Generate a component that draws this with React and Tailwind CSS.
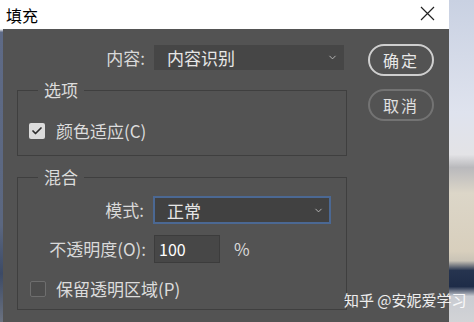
import { Check, ChevronDown } from 'lucide-react'

const font = { fontFamily: '"Noto Sans CJK SC", "Noto Sans", sans-serif' }

function Select({ value, className }) {
  return (
    <div className={`flex items-center justify-between ${className}`}>
      <span className="text-[17px] text-[#e6e6e6] leading-none">{value}</span>
      <ChevronDown size={11} strokeWidth={2} className="text-[#bdbdbd]" />
    </div>
  )
}

export default function App() {
  return (
    <div className="flex w-[474px] h-[322px] overflow-hidden relative" style={font}>
      <div className="w-[3px] bg-[linear-gradient(to_bottom,#ffffff_0%,#ffffff_9%,#5e6a86_10%,#5b6780_70%,#3c4a66_85%,#6b7280_100%)]" />

      <div className="w-[446px] flex flex-col bg-[#535353]">
        {/* title bar */}
        <div className="h-[29px] bg-white flex items-center justify-between pl-[3px] pr-[14px]">
          <span className="text-[16px] text-black leading-none">填充</span>
          <svg width="15" height="15" viewBox="0 0 15 15" className="mb-[2px]">
            <path d="M1 1 L14 14 M14 1 L1 14" stroke="#222" strokeWidth="1.2" fill="none" />
          </svg>
        </div>

        {/* body */}
        <div className="flex pl-[14px]">
          <div className="w-[330px] flex flex-col">
            <div className="flex items-center mt-[16px] h-[25px]">
              <div className="w-[137px] pr-[9px] text-right text-[17px] text-[#d9d9d9]">内容:</div>
              <Select value="内容识别" className="w-[190px] h-[25px] bg-[#464646] pl-[13px] pr-[6px]" />
            </div>

            <fieldset className="mt-[10px] border border-[#3f3f3f] pb-[14px]">
              <legend className="ml-[20px] px-[6px] text-[17px] leading-[20px] text-[#dcdcdc]">选项</legend>
              <div className="flex items-center h-[20px] mt-[21px] pl-[11px]">
                <div className="w-[16px] h-[16px] rounded-[2px] bg-[#dcdcdc] flex items-center justify-center">
                  <Check size={12} strokeWidth={3.5} className="text-[#2e2e2e]" />
                </div>
                <span className="ml-[11px] text-[17px] text-[#dcdcdc]">颜色适应(C)</span>
              </div>
            </fieldset>

            <fieldset className="mt-[11px] border border-[#3f3f3f] pb-[10px]">
              <legend className="ml-[20px] px-[6px] text-[17px] leading-[20px] text-[#dcdcdc]">混合</legend>
              <div className="flex items-center mt-[9px] h-[28px]">
                <div className="w-[135px] pr-[9px] text-right text-[17px] text-[#d9d9d9]">模式:</div>
                <Select value="正常" className="w-[178px] h-[28px] bg-[#414141] border-2 border-[#4b6893] pl-[12px] pr-[5px]" />
              </div>
              <div className="flex items-center mt-[11px] h-[28px]">
                <div className="w-[136px] pr-[8px] text-right text-[17px] text-[#d9d9d9] whitespace-nowrap">不透明度(O):</div>
                <div className="w-[66px] h-[28px] bg-[#474747] border border-[#3c3c3c] flex items-center pl-[4px] text-[16px] text-white">100</div>
                <span className="ml-[14px] text-[17px] text-[#d9d9d9]">%</span>
              </div>
              <div className="flex items-center h-[20px] mt-[16px] pl-[12px]">
                <div className="w-[16px] h-[16px] rounded-[2px] border border-[#6e6e6e] bg-[#4d4d4d]" />
                <span className="ml-[10px] text-[17px] text-[#dcdcdc]">保留透明区域(P)</span>
              </div>
            </fieldset>
          </div>

          <div className="ml-[21px] flex flex-col pt-[15px] gap-[13px]">
            <button className="w-[66px] h-[32px] rounded-full border-2 border-[#cfcfcf] text-[16px] text-[#e8e8e8] tracking-[2px]">确定</button>
            <button className="w-[66px] h-[32px] rounded-full border-2 border-[#737373] text-[16px] text-[#e0e0e0] tracking-[2px]">取消</button>
          </div>
        </div>
      </div>

      <div className="flex-1 bg-[linear-gradient(to_bottom,#c9d1e2_0%,#dfe3ee_35%,#e3e3e6_48%,#b9b9bc_52%,#dcd6c8_60%,#d8cfbd_78%,#c9c3b6_81%,#26344f_84%,#1e2c48_89%,#c9ccd2_92%,#d2d3d6_100%)]" />

      <div className="absolute left-[344px] top-[290px] text-[15px] text-white/90 leading-[20px] whitespace-nowrap">知乎 @安妮爱学习</div>
    </div>
  )
}
